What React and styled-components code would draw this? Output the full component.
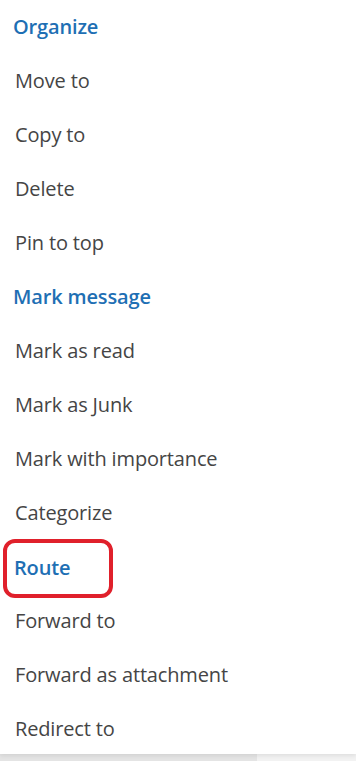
import React from "react";
import styled, { createGlobalStyle } from "styled-components";

const GlobalStyle = createGlobalStyle`
  html, body {
    margin: 0;
    padding: 0;
    background: #f3f3f3;
  }
  body {
    font-family: "Segoe UI", "Open Sans", "Noto Sans", sans-serif;
  }
`;

const Page = styled.div`
  width: 356px;
  height: 761px;
  overflow: hidden;
  background: linear-gradient(to right, #e4e4e4 0, #e4e4e4 257px, #f2f2f2 257px);
`;

const Panel = styled.div`
  display: flex;
  flex-direction: column;
  background: #ffffff;
  height: 754px;
  box-sizing: border-box;
  box-shadow: 0 2px 4px rgba(0, 0, 0, 0.08);
`;

const Row = styled.div`
  height: 54px;
  flex: 0 0 54px;
  display: flex;
  align-items: center;
  padding-left: ${(p) => (p.$header ? "13px" : "15px")};
  padding-bottom: 1px;
  box-sizing: border-box;
  font-size: 20px;
  font-weight: ${(p) => (p.$header ? 600 : 400)};
  color: ${(p) => (p.$header ? "#1e6fb4" : "#454545")};
  letter-spacing: -0.15px;
`;

const Highlight = styled.span`
  display: inline-flex;
  align-items: center;
  flex: 0 0 auto;
  margin-left: -10px;
  margin-top: 4px;
  width: 110px;
  padding-left: 7px;
  padding-bottom: 2px;
  height: 59px;
  border: 4px solid #e0202b;
  border-radius: 12px;
  box-sizing: border-box;
`;

const items = [
  { label: "Organize", header: true },
  { label: "Move to" },
  { label: "Copy to" },
  { label: "Delete" },
  { label: "Pin to top" },
  { label: "Mark message", header: true },
  { label: "Mark as read" },
  { label: "Mark as Junk" },
  { label: "Mark with importance" },
  { label: "Categorize" },
  { label: "Route", header: true, marked: true },
  { label: "Forward to" },
  { label: "Forward as attachment" },
  { label: "Redirect to" },
];

const App = () => {
  return (
    <Page>
      <GlobalStyle />
      <Panel>
        {items.map((it) => (
          <Row key={it.label} $header={it.header}>
            {it.marked ? <Highlight>{it.label}</Highlight> : it.label}
          </Row>
        ))}
      </Panel>
    </Page>
  );
};

export default App;
